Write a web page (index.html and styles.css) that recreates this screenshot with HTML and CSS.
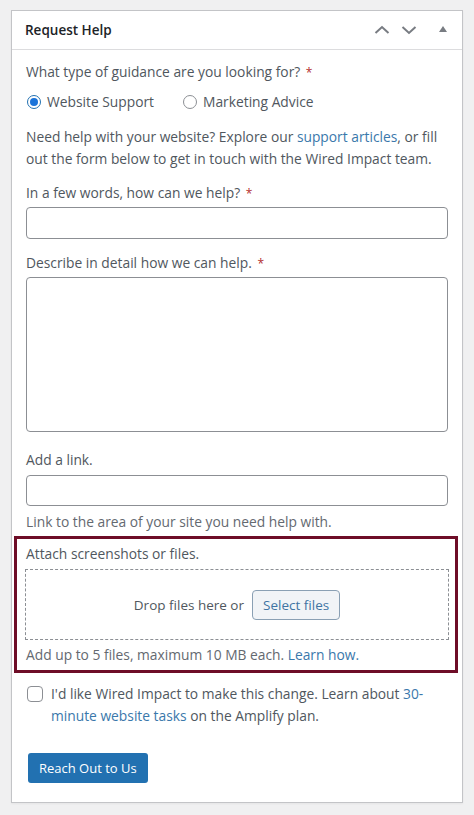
FILE: index.html
```html
<!DOCTYPE html>
<html lang="en">
<head>
<meta charset="utf-8">
<title>Request Help</title>
<link rel="stylesheet" href="styles.css">
</head>
<body>
<div class="panel">
  <div class="panel-header">
    <h2 class="panel-title">Request Help</h2>
    <div class="panel-actions">
      <svg class="act" width="16" height="10" viewBox="0 0 16 10"><polyline points="1.5,8 8,2 14.5,8" fill="none" stroke="#787c82" stroke-width="2"/></svg>
      <svg class="act" width="16" height="10" viewBox="0 0 16 10"><polyline points="1.5,2 8,8 14.5,2" fill="none" stroke="#787c82" stroke-width="2"/></svg>
      <svg class="act tri" width="8" height="6" viewBox="0 0 8 6"><polygon points="0,6 8,6 4,0" fill="#787c82"/></svg>
    </div>
  </div>
  <div class="panel-body">
    <p class="label q">What type of guidance are you looking for? <span class="req">*</span></p>
    <div class="radios">
      <label class="radio"><span class="dot checked"></span>Website Support</label>
      <label class="radio"><span class="dot"></span>Marketing Advice</label>
    </div>
    <p class="intro">Need help with your website? Explore our <a href="#">support articles</a>, or fill out the form below to get in touch with the Wired Impact team.</p>
    <p class="label">In a few words, how can we help? <span class="req">*</span></p>
    <div class="field input"></div>
    <p class="label l2">Describe in detail how we can help. <span class="req">*</span></p>
    <div class="field textarea"></div>
    <p class="label l3">Add a link.</p>
    <div class="field input i3"></div>
    <p class="hint">Link to the area of your site you need help with.</p>
    <div class="highlight">
      <p class="label att">Attach screenshots or files.</p>
      <div class="drop">
        <span class="drop-text">Drop files here or</span>
        <span class="btn-secondary">Select files</span>
      </div>
      <p class="hint h2">Add up to 5 files, maximum 10 MB each. <a href="#">Learn how.</a></p>
    </div>
    <div class="check-row">
      <span class="checkbox"></span>
      <p class="check-text">I'd like Wired Impact to make this change. Learn about <a href="#">30-minute website tasks</a> on the Amplify plan.</p>
    </div>
    <span class="btn-primary">Reach Out to Us</span>
  </div>
</div>
</body>
</html>
```
FILE: styles.css
```css
* { box-sizing: border-box; }
html, body { margin: 0; padding: 0; }
body {
  background: #f0f0f1;
  font-family: "Open Sans", "Noto Sans", sans-serif;
  font-size: 13.8px;
  line-height: 22px;
  color: #50575e;
  height: 815px;
  padding-top: 10px;
}
a { color: #3a78ab; text-decoration: none; }
p { margin: 0; }
.panel {
  margin: 0 11px;
  background: #fff;
  border: 1px solid #c3c4c7;
  box-shadow: 0 1px 2px rgba(0,0,0,0.05);
  height: 793px;
}
.panel-header {
  height: 39px;
  border-bottom: 1px solid #dcdcde;
  display: flex;
  align-items: center;
  justify-content: space-between;
  padding: 0 15px 0 13px;
}
.panel-title {
  margin: 0;
  font-size: 13.5px;
  font-weight: 600;
  color: #1d2327;
  line-height: 20px;
}
.panel-actions { display: flex; align-items: center; gap: 11px; }
.act { display: block; }
.tri { margin-left: 11px; margin-top: -2px; }
.panel-body { padding: 11px 14px 0 14px; }
.req { color: #b32d2e; font-size: 12px; line-height: 1; margin-left: 2px; }
.radios { display: flex; gap: 28px; margin-top: 8px; }
.radio { display: flex; align-items: center; color: #50575e; }
.dot {
  width: 14px; height: 14px; border-radius: 50%;
  border: 1px solid #8c8f94;
  margin: 0 6px 0 1px;
  display: inline-block;
  position: relative;
}
.dot.checked { border-color: #2271b1; }
.dot.checked::after {
  content: ""; position: absolute; left: 2px; top: 2px;
  width: 8px; height: 8px; border-radius: 50%; background: #1a73d9;
}
.intro { margin-top: 13px; }
.label { margin-top: 12px; }
.label.q { margin-top: 0; }
.field {
  border: 1px solid #8c8f94;
  border-radius: 4px;
  background: #fff;
  margin-top: 3px;
}
.input { height: 32px; }
.textarea { height: 155px; }
.l2 { margin-top: 13px; }
.l3 { margin-top: 17px; }
.i3 { margin-top: 4px; height: 31px; }
.hint { color: #646970; margin-top: 5px; }
.highlight {
  margin: 3px -10px 0 -12px;
  border: 3px solid #6e0d27;
  padding: 4px 6px 4px 8px;
}
.att { margin-top: 0; padding-left: 1px; }
.drop {
  margin-top: 4px;
  height: 71px;
  border: 1px dashed #8c8f94;
  display: flex;
  align-items: center;
  justify-content: center;
  gap: 8px;
}
.drop-text { color: #50575e; font-size: 13.5px; }
.btn-secondary {
  display: inline-block;
  height: 30px;
  line-height: 28px;
  padding: 0 10px;
  border: 1px solid #8aa0b4;
  border-radius: 4px;
  background: #f1f4f7;
  color: #3f74a3;
  font-size: 13.5px;
}
.h2 { margin-top: 4px; padding-left: 1px; }
.check-row { display: flex; align-items: flex-start; margin-top: 10px; }
.checkbox {
  flex: none;
  width: 16px; height: 16px;
  border: 1px solid #8c8f94;
  border-radius: 4px;
  margin: 3px 8px 0 1px;
}
.check-text { flex: 1; padding-right: 8px; }
.btn-primary {
  display: inline-block;
  margin-top: 26px;
  margin-left: 2px;
  height: 30px;
  line-height: 30px;
  padding: 0 11px;
  background: #2271b1;
  color: #fff;
  border-radius: 3px;
  font-size: 13px;
}
```
